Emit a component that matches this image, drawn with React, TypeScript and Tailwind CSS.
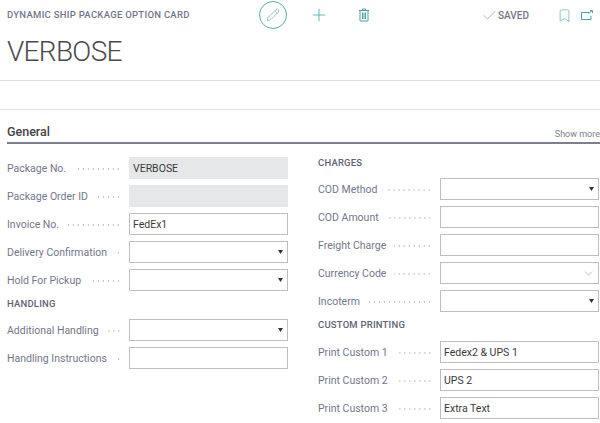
import React from "react";
import { Pencil, Plus, Check, Bookmark, ChevronDown } from "lucide-react";

type Kind = "text" | "readonly" | "select" | "combo";

const Field = ({ label, value, kind = "text" }: { label: string; value?: string; kind?: Kind }) => {
  const box =
    kind === "readonly"
      ? "bg-[#e6e7e9] border-[#e6e7e9]"
      : "bg-white border-[#bdbec0]";
  return (
    <div className="flex items-center h-[22px] mb-[6px]">
      <div className="w-[122px] shrink-0 flex items-center pr-[8px] pt-[2px] text-[10.5px] text-[#73768a]">
        <span className="whitespace-nowrap mr-[8px]">{label}</span>
        <span className="flex-1 h-[4px] bg-[radial-gradient(circle,#c0c1ca_0.6px,transparent_0.8px)] bg-[length:5px_4px] bg-repeat-x bg-right" />
      </div>
      <div
        className={`flex-1 h-[22px] border flex items-center justify-between px-[3px] text-[10.5px] text-[#3a3a3a] ${box}`}
      >
        <span className="pt-[2px]">{value}</span>
        {kind === "select" && (
          <svg width="5" height="4" viewBox="0 0 5 4" className="mr-[1px]">
            <path d="M0 0h5L2.5 4z" fill="#333" />
          </svg>
        )}
        {kind === "combo" && <ChevronDown size={13} strokeWidth={1} className="text-[#7f8085]" />}
      </div>
    </div>
  );
};

const GroupTitle = ({ children }: { children: React.ReactNode }) => (
  <div className="font-medium text-[9.5px] tracking-[0.2px] text-[#5f6272] uppercase">
    {children}
  </div>
);

export default function App() {
  return (
    <div className="w-[600px] h-[423px] overflow-hidden bg-white font-['Roboto',sans-serif]">
      {/* top bar */}
      <div className="flex items-center h-[28px] mt-[1px] pl-[7px] text-[#4fa3a6]">
        <div className="w-[252px] font-medium text-[9.5px] tracking-[0.28px] text-[#73768a]">
          DYNAMIC SHIP PACKAGE OPTION CARD
        </div>
        <button className="w-[28px] h-[28px] rounded-full border border-[#5cabae] flex items-center justify-center">
          <Pencil size={14} strokeWidth={1} />
        </button>
        <Plus size={20} strokeWidth={1} className="ml-[22px]" />
        <svg width="12" height="14" viewBox="0 0 12 14" fill="none" stroke="currentColor" strokeWidth="1" className="ml-[29px]">
          <path d="M1 2.5h10M4.5 2.5V1h3v1.5M2 2.5V13h8V2.5" />
          <path d="M4.5 4.5v6.5M6 4.5v6.5M7.5 4.5v6.5" />
        </svg>
        <div className="flex items-center ml-[111px] text-[#73768a]">
          <Check size={17} strokeWidth={0.9} className="text-[#8a8b96]" />
          <span className="font-medium text-[10px]">SAVED</span>
        </div>
        <Bookmark size={15} strokeWidth={1} className="ml-[28px]" />
        <svg width="12" height="10" viewBox="0 0 12 10" fill="none" stroke="currentColor" strokeWidth="1" className="ml-[9px]">
          <path d="M8 2.5H.5v7h9.5V6" />
          <path d="M7.5 3.5 11 .8M9 .5h2.5V3" />
        </svg>
      </div>

      {/* record title */}
      <div className="pl-[7px] mt-[8px] h-[30px] flex items-center text-[28px] tracking-[-0.7px] font-light text-[#4a4a4a] leading-none">
        VERBOSE
      </div>

      <div className="mt-[13px] h-[1px] bg-[#dfdfe5]" />
      <div className="mt-[28px] h-[1px] bg-[#dfdfe5]" />

      {/* fast tab header */}
      <div className="ml-[7px] mt-[14px] h-[20px] flex items-end justify-between border-b-2 border-[#7d7f8f] pb-[1px]">
        <span className="text-[12.5px] font-medium text-[#444] leading-[18px]">General</span>
        <span className="text-[9px] text-[#7c7e88]">Show more</span>
      </div>

      {/* two column form */}
      <div className="grid grid-cols-[281px_281px] gap-x-[30px] pl-[7px]">
        <div className="pt-[13px]">
          <Field label="Package No." value="VERBOSE" kind="readonly" />
          <Field label="Package Order ID" kind="readonly" />
          <Field label="Invoice No." value="FedEx1" />
          <Field label="Delivery Confirmation" kind="select" />
          <Field label="Hold For Pickup" kind="select" />
          <div className="mt-[6px] mb-[8px]">
            <GroupTitle>Handling</GroupTitle>
          </div>
          <Field label="Additional Handling" kind="select" />
          <Field label="Handling Instructions" />
        </div>
        <div className="pt-[12px]">
          <div className="mb-[8px]">
            <GroupTitle>Charges</GroupTitle>
          </div>
          <Field label="COD Method" kind="select" />
          <Field label="COD Amount" />
          <Field label="Freight Charge" />
          <Field label="Currency Code" kind="combo" />
          <Field label="Incoterm" kind="select" />
          <div className="mt-[2px] mb-[8px]">
            <GroupTitle>Custom Printing</GroupTitle>
          </div>
          <Field label="Print Custom 1" value="Fedex2 & UPS 1" />
          <Field label="Print Custom 2" value="UPS 2" />
          <Field label="Print Custom 3" value="Extra Text" />
        </div>
      </div>
    </div>
  );
}
